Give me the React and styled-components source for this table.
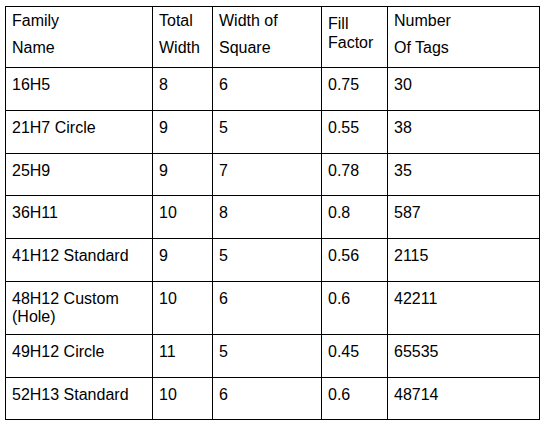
import React from 'react'
import styled, { createGlobalStyle } from 'styled-components'

const Global = createGlobalStyle`
  html, body {
    margin: 0;
    padding: 0;
    background: #ffffff;
  }
  body {
    font-family: "Liberation Sans", Arial, sans-serif;
    color: #000;
  }
`

const Page = styled.div`
  padding: 6px 0 0 5px;
`

const Table = styled.div`
  display: grid;
  grid-template-columns: 146px 59px 108px 65px 151px;
  grid-template-rows: 60px 42px 42px 41px 42px 42px 52px 42px 41px;
  gap: 1px;
  padding: 1px;
  width: max-content;
  background: #000;
`

const Cell = styled.div`
  background: #fff;
  padding: ${p => p.$pt}px 6px 0 6px;
  font-size: 16px;
  line-height: ${p => p.$lh}px;
  white-space: pre-line;
  overflow: hidden;
`

const head = [
  { text: 'Family\nName', lh: 27, pt: 0 },
  { text: 'Total\nWidth', lh: 27, pt: 0 },
  { text: 'Width of\nSquare', lh: 27, pt: 0 },
  { text: 'Fill\nFactor', lh: 19, pt: 7 },
  { text: 'Number\nOf Tags', lh: 27, pt: 0 },
]

const rows = [
  ['16H5', '8', '6', '0.75', '30'],
  ['21H7 Circle', '9', '5', '0.55', '38'],
  ['25H9', '9', '7', '0.78', '35'],
  ['36H11', '10', '8', '0.8', '587'],
  ['41H12 Standard', '9', '5', '0.56', '2115'],
  ['48H12 Custom\n(Hole)', '10', '6', '0.6', '42211'],
  ['49H12 Circle', '11', '5', '0.45', '65535'],
  ['52H13 Standard', '10', '6', '0.6', '48714'],
]

export default function App() {
  return (
    <Page>
      <Global />
      <Table>
        {head.map(h => (
          <Cell key={h.text} $lh={h.lh} $pt={h.pt}>
            {h.text}
          </Cell>
        ))}
        {rows.map((r, i) =>
          r.map((v, j) => (
            <Cell key={i + '-' + j} $lh={18} $pt={7.5}>
              {v}
            </Cell>
          ))
        )}
      </Table>
    </Page>
  )
}
